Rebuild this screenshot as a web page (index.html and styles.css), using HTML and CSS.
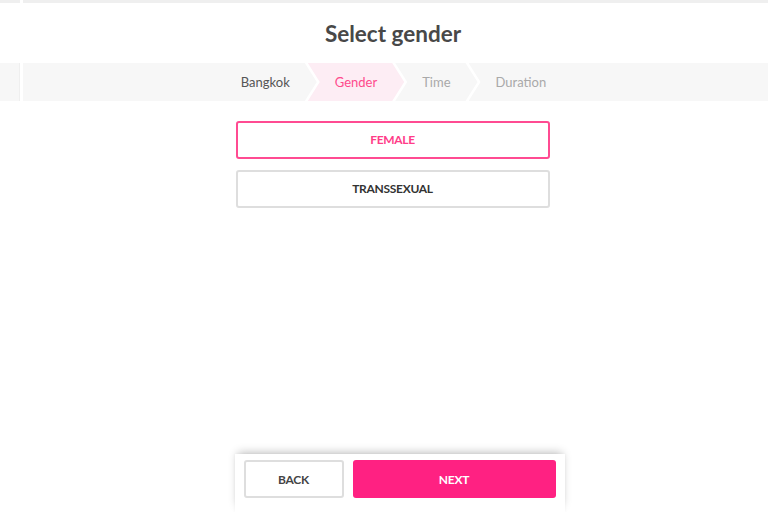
FILE: index.html
```html
<!DOCTYPE html>
<html lang="en">
<head>
<meta charset="utf-8">
<title>Select gender</title>
<link rel="stylesheet" href="styles.css">
</head>
<body>
<div class="page">
  <aside class="side">
    <div class="side-top"></div>
    <div class="side-band"></div>
  </aside>
  <main class="main">
    <div class="topline"></div>
    <h1 class="title">Select gender</h1>
    <nav class="steps">
      <div class="steps-track">
        <span class="step done first">Bangkok</span>
        <span class="step active">Gender</span>
        <span class="step">Time</span>
        <span class="step last">Duration</span>
      </div>
    </nav>
    <div class="options">
      <button class="option selected">FEMALE</button>
      <button class="option">TRANSSEXUAL</button>
    </div>
    <footer class="footer">
      <button class="btn back">BACK</button>
      <button class="btn next">NEXT</button>
    </footer>
  </main>
</div>
</body>
</html>
```
FILE: styles.css
```css
* { box-sizing: border-box; }
html, body { margin: 0; padding: 0; background: #fff; }
body { font-family: Lato, "Open Sans", "Liberation Sans", sans-serif; }

.page { display: flex; height: 512px; overflow: hidden; }

.side { width: 20px; flex: none; margin-right: 3px; }
.side-top { height: 3px; background: #efefef; }
.side-band { margin-top: 60px; height: 38px; background: #f7f7f7; border-right: 1px solid #efefef; }

.main { flex: 1; display: flex; flex-direction: column; min-width: 0; }
.topline { height: 3px; background: #efefef; }

.title {
  margin: 0;
  height: 60px;
  padding-right: 5px;
  display: flex;
  align-items: center;
  justify-content: center;
  font-size: 22.5px;
  font-weight: 700;
  color: #484848;
}

.steps { height: 38px; background: #f7f7f7; display: flex; justify-content: center; }
.steps-track { display: flex; background: #fff; margin-left: -6px; }
.step {
  background: #f7f7f7;
  line-height: 38px;
  height: 38px;
  padding: 0 27px;
  font-size: 13px;
  color: #a9a9a9;
  margin-left: -9px;
  clip-path: polygon(0 0, calc(100% - 12px) 0, 100% 50%, calc(100% - 12px) 100%, 0 100%, 12px 50%);
}
.step.first {
  margin-left: 0;
  padding-left: 18px;
  padding-right: 27px;
  clip-path: polygon(0 0, calc(100% - 12px) 0, 100% 50%, calc(100% - 12px) 100%, 0 100%);
}
.step.last {
  padding-right: 16px;
  clip-path: polygon(0 0, 100% 0, 100% 100%, 0 100%, 12px 50%);
}
.step.done { color: #555; }
.step.active { background: #fdedf4; color: #ff4a8c; }

.options {
  align-self: flex-start;
  width: 314px;
  margin: 20px 0 0 calc(50% - 160px);
  display: flex;
  flex-direction: column;
  gap: 11px;
}
.option {
  height: 38px;
  border: 2px solid #dedede;
  border-radius: 3px;
  background: #fff;
  font-family: inherit;
  font-size: 12px;
  font-weight: 700;
  letter-spacing: -0.3px;
  color: #333;
  padding: 0 0 1px;
}
.option.selected { border-color: #ff4b92; color: #ff3d89; }

.footer {
  margin: auto auto 0 calc(50% - 161px);
  width: 330px;
  padding: 6px 9px 14px;
  background: #fff;
  box-shadow: 0 -4px 9px -3px rgba(0, 0, 0, 0.28), 0 0 3px rgba(0, 0, 0, 0.04);
  display: flex;
  gap: 9px;
}
.btn {
  height: 38px;
  border-radius: 3px;
  font-family: inherit;
  font-size: 12px;
  font-weight: 700;
  letter-spacing: -0.2px;
  padding: 0;
}
.back { width: 100px; background: #fff; border: 2px solid #dedede; color: #444; }
.next { flex: 1; background: #ff2182; border: none; color: #fff; }
```
